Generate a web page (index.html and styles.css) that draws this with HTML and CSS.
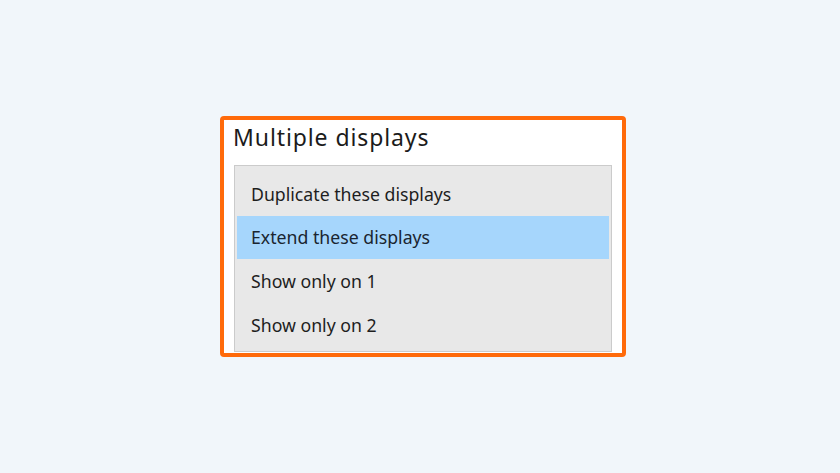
FILE: index.html
```html
<!DOCTYPE html>
<html>
<head>
<meta charset="utf-8">
<link rel="stylesheet" href="styles.css">
</head>
<body>
<div class="page">
  <div class="frame">
    <div class="title">Multiple displays</div>
    <div class="listbox">
      <div class="item">Duplicate these displays</div>
      <div class="item selected">Extend these displays</div>
      <div class="item">Show only on 1</div>
      <div class="item">Show only on 2</div>
    </div>
  </div>
</div>
</body>
</html>
```
FILE: styles.css
```css
html, body {
  margin: 0;
  padding: 0;
  background: #f1f6fa;
}
.page {
  width: 840px;
  height: 473px;
  padding-top: 116px;
  padding-left: 220px;
  box-sizing: border-box;
}
.frame {
  width: 406px;
  height: 241px;
  box-sizing: border-box;
  border: 4px solid #ff6a0a;
  border-radius: 4px;
  background: #ffffff;
  overflow: hidden;
  font-family: "Noto Sans", "Open Sans", sans-serif;
}
.title {
  padding: 2px 0 0 9px;
  height: 43px;
  box-sizing: border-box;
  font-size: 23px;
  line-height: 30px;
  letter-spacing: 0.9px;
  color: #1b1b1b;
}
.listbox {
  margin: 2px 10px 0 10px;
  height: 187px;
  box-sizing: border-box;
  border: 1px solid #cbcbcb;
  background: #e8e8e8;
  padding: 6px 2px 0 2px;
  overflow: hidden;
}
.item {
  height: 44px;
  line-height: 44px;
  font-size: 17.7px;
  color: #1e1e1e;
  padding-left: 14px;
}
.item.selected {
  background: #a6d6fc;
  height: 43px;
  line-height: 43px;
  color: #1a2530;
}
```
